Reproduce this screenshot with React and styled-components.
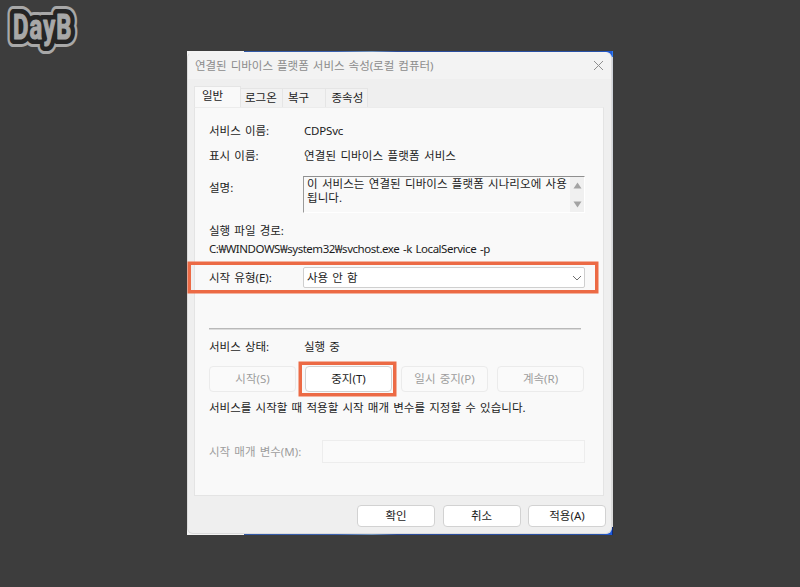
import React from "react";
import styled, { createGlobalStyle } from "styled-components";

const GlobalStyle = createGlobalStyle`
  * {
    box-sizing: border-box;
  }
  body {
    margin: 0;
    background: #3d3d3d;
    font-family: "Noto Sans", "Noto Sans CJK KR", sans-serif;
    font-size: 11.5px;
    line-height: 14px;
    word-spacing: 1.2px;
    color: #1c1c1c;
    overflow: hidden;
  }
`;

const Page = styled.div`
  position: relative;
  width: 800px;
  height: 587px;
  padding: 51px 0 0 187px;
`;

const Logo = styled.svg`
  position: absolute;
  left: 0;
  top: 0;
  word-spacing: 0;
`;

const Desktop = styled.div`
  width: 426px;
  height: 484px;
  padding: 1px 1px 1px 0;
  background:
    linear-gradient(#2f7bf0 6px, #cfd3da 6px, #dcdcdc 476px, #0d2a78 476px) right / 1px 100% no-repeat,
    linear-gradient(
      90deg,
      #f4f4f4 57px,
      #3158a5 57px,
      #3c62b0 150px,
      #7294bd 185px,
      #2c4c9b 210px,
      #2852a8 410px,
      #1d5be0
    );
`;

const Dialog = styled.div`
  display: flex;
  flex-direction: column;
  width: 425px;
  height: 482px;
  background: #efefef;
  border: 1px solid #dcdcdc;
  border-top-color: #f4f4f4;
  border-radius: 6px;
`;

const TitleBar = styled.div`
  display: flex;
  justify-content: space-between;
  align-items: center;
  height: 26px;
  padding: 0 7px 1px 7px;
  background: #f3f3f3;
  border-radius: 5px 5px 0 0;
  color: #8c8c8c;
`;

const Tabs = styled.div`
  display: flex;
  align-items: flex-end;
  height: 28px;
  padding-left: 6px;
`;

const Tab = styled.div`
  width: ${(p) => p.$width}px;
  height: ${(p) => (p.$active ? 21 : 19)}px;
  padding: 2px 0 0 ${(p) => p.$indent}px;
  background: ${(p) => (p.$active ? "#f9f9f9" : "#f2f2f2")};
  border: 1px solid #e5e5e5;
  border-bottom: 0;
  border-left-width: ${(p) => (p.$active ? 1 : 0)}px;
  white-space: nowrap;
`;

const Panel = styled.div`
  width: 410px;
  height: 389px;
  margin-left: 6px;
  padding: 10px 0 0 14px;
  background: #f9f9f9;
  border: 1px solid #e4e4e4;
  border-top-color: #ececec;
`;

const Row = styled.div`
  position: relative;
  display: flex;
  align-items: ${(p) => p.$align || "center"};
  width: 376px;
  height: ${(p) => p.$height}px;
  margin-top: ${(p) => p.$top || 0}px;
  color: ${(p) => (p.$disabled ? "#9d9d9d" : "inherit")};
  white-space: nowrap;
`;

const Label = styled.div`
  width: ${(p) => p.$width || 95}px;
  padding-top: ${(p) => p.$top || 0}px;
`;

const Text = styled.span`
  letter-spacing: ${(p) => p.$spacing || 0}px;
`;

const Description = styled.div`
  display: flex;
  justify-content: space-between;
  width: 282px;
  height: 37px;
  margin-left: -1px;
  padding-left: 3px;
  border: 1px solid #fff;
  border-top-color: #8f8f8f;
  border-left-color: #9a9a9a;
  line-height: 14px;
  letter-spacing: 0.07px;
`;

const ScrollBar = styled.div`
  display: flex;
  flex-direction: column;
  justify-content: space-between;
  align-items: center;
  width: 14px;
  padding: 5px 0 4px;
  background: #f0f0f0;
`;

const Select = styled.div`
  display: flex;
  justify-content: space-between;
  align-items: center;
  width: 282px;
  height: 21px;
  margin-left: -1px;
  padding: 0 2px 0 3px;
  background: #fff;
  border: 1px solid #cfcfcf;
  border-radius: 2px;
`;

const Divider = styled.div`
  width: 372px;
  height: 2px;
  margin-top: 40px;
  background: #b9b9b9;
  border-bottom: 1px solid #dcdcdc;
`;

const Button = styled.div`
  display: flex;
  justify-content: center;
  align-items: center;
  flex: none;
  width: ${(p) => p.$width || 87}px;
  height: ${(p) => p.$height || 26}px;
  background: ${(p) => (p.$disabled ? "#fafafa" : "#fff")};
  border: 1px solid ${(p) => (p.$disabled ? "#ebebeb" : "#d2d2d2")};
  border-radius: 4px;
  color: ${(p) => (p.$disabled ? "#9d9d9d" : "#1c1c1c")};
`;

const Actions = styled.div`
  display: flex;
  position: relative;
  justify-content: space-between;
  width: 375px;
  margin-top: 10px;
`;

const ParamInput = styled.div`
  width: 263px;
  height: 23px;
  background: #fafafa;
  border: 1px solid #ededed;
`;

const Footer = styled.div`
  display: flex;
  justify-content: flex-end;
  gap: 7.5px;
  padding: 9px 5px 0 0;
`;

const Highlight = styled.div`
  position: absolute;
  left: ${(p) => p.$x}px;
  top: ${(p) => p.$y}px;
  width: ${(p) => p.$width}px;
  height: ${(p) => p.$height}px;
  border: 3.5px solid #ec6a45;
  box-shadow: 0 0 0 0.5px #ec6a45;
`;

const Arrow = ({ down }) => (
  <svg width="9" height="7">
    <path d={down ? "M0.5 0.5h8L4.5 6.5z" : "M0.5 6.5h8L4.5 0.5z"} fill="#a3a3a3" />
  </svg>
);

const logoText = {
  fontFamily: "Roboto",
  fontWeight: 700,
  fontSize: 34.5,
  letterSpacing: 1.6,
  strokeLinejoin: "round",
};

export default function App() {
  return (
    <>
      <GlobalStyle />
      <Page>
        <Logo width="90" height="60">
          <defs>
            <text id="dayb" {...logoText} transform="translate(13 39.3) scale(0.69 1)">
              DayB
            </text>
          </defs>
          <g fill="#a8a8a8" stroke="#a8a8a8" strokeWidth="16">
            <use href="#dayb" x="-1.5" />
            <use href="#dayb" x="1.5" />
          </g>
          <g fill="#252525" stroke="#252525" strokeWidth="10">
            <use href="#dayb" x="-1.2" />
            <use href="#dayb" x="1.2" />
          </g>
          <use href="#dayb" fill="#a8a8a8" stroke="#a8a8a8" strokeWidth="1.2" />
        </Logo>

        <Desktop>
          <Dialog>
            <TitleBar>
              <Text $spacing={-0.04}>연결된 디바이스 플랫폼 서비스 속성(로컬 컴퓨터)</Text>
              <svg width="11" height="11" stroke="#8f8f8f" fill="none">
                <path d="M1 1l9 9M10 1l-9 9" />
              </svg>
            </TitleBar>

            <Tabs>
              <Tab $active $width={47} $indent={7}>일반</Tab>
              <Tab $width={42} $indent={4}>로그온</Tab>
              <Tab $width={43} $indent={5}>복구</Tab>
              <Tab $width={42} $indent={5.5}>종속성</Tab>
            </Tabs>

            <Panel>
              <Row $height={25}>
                <Label>서비스 이름:</Label>
                <Text $spacing={-0.2}>CDPSvc</Text>
              </Row>
              <Row $height={25}>
                <Label>표시 이름:</Label>
                <Text $spacing={0.12}>연결된 디바이스 플랫폼 서비스</Text>
              </Row>
              <Row $height={37} $top={8} $align="flex-start">
                <Label $top={5}>설명:</Label>
                <Description>
                  <div>
                    이 서비스는 연결된 디바이스 플랫폼 시나리오에 사용
                    <br />
                    됩니다.
                  </div>
                  <ScrollBar>
                    <Arrow />
                    <Arrow down />
                  </ScrollBar>
                </Description>
              </Row>
              <Row $height={18} $top={9}>실행 파일 경로:</Row>
              <Row $height={18}>
                <Text $spacing={-0.47}>
                  C:₩WINDOWS₩system32₩svchost.exe -k LocalService -p
                </Text>
              </Row>
              <Row $height={21} $top={9}>
                <Label>시작 유형(E):</Label>
                <Select>
                  사용 안 함
                  <svg width="10" height="8" stroke="#707070" fill="none">
                    <path d="M1 2l4 4 4-4" />
                  </svg>
                </Select>
                <Highlight $x={-21} $y={-5} $width={410} $height={31} />
              </Row>

              <Divider />

              <Row $height={18} $top={8}>
                <Label>서비스 상태:</Label>
                <Text>실행 중</Text>
              </Row>
              <Actions>
                <Button $disabled>시작(S)</Button>
                <Button>중지(T)</Button>
                <Button $disabled>일시 중지(P)</Button>
                <Button $disabled>계속(R)</Button>
                <Highlight $x={90} $y={-4} $width={97} $height={34} />
              </Actions>
              <Row $height={18} $top={7}>
                <Text $spacing={0.02}>
                  서비스를 시작할 때 적용할 시작 매개 변수를 지정할 수 있습니다.
                </Text>
              </Row>
              <Row $height={23} $top={23} $disabled>
                <Label $width={113}>시작 매개 변수(M):</Label>
                <ParamInput />
              </Row>
            </Panel>

            <Footer>
              <Button $width={78} $height={22}>확인</Button>
              <Button $width={78} $height={22}>취소</Button>
              <Button $width={78} $height={22}>적용(A)</Button>
            </Footer>
          </Dialog>
        </Desktop>
      </Page>
    </>
  );
}
